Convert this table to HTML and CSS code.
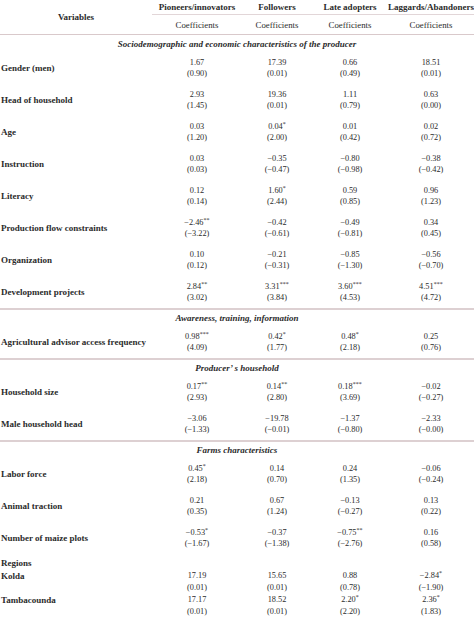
FILE: index.html
```html
<!DOCTYPE html>
<html lang="en">
<head>
<meta charset="utf-8">
<title>Coefficients table</title>
<link rel="stylesheet" href="styles.css">
</head>
<body>
<div class="table">
  <div class="head">
    <div class="var">Variables</div>
    <div class="grp">Pioneers/innovators</div>
    <div class="grp">Followers</div>
    <div class="grp">Late adopters</div>
    <div class="grp">Laggards/Abandoners</div>
    <div class="sub">Coefficients</div>
    <div class="sub">Coefficients</div>
    <div class="sub">Coefficients</div>
    <div class="sub">Coefficients</div>
  </div>

  <div class="section first">Sociodemographic and economic characteristics of the producer</div>
  <div class="row"><div class="label">Gender (men)</div>
    <div class="val"><span>1.67</span><span>(0.90)</span></div>
    <div class="val"><span>17.39</span><span>(0.01)</span></div>
    <div class="val"><span>0.66</span><span>(0.49)</span></div>
    <div class="val"><span>18.51</span><span>(0.01)</span></div></div>
  <div class="row"><div class="label">Head of household</div>
    <div class="val"><span>2.93</span><span>(1.45)</span></div>
    <div class="val"><span>19.36</span><span>(0.01)</span></div>
    <div class="val"><span>1.11</span><span>(0.79)</span></div>
    <div class="val"><span>0.63</span><span>(0.00)</span></div></div>
  <div class="row"><div class="label">Age</div>
    <div class="val"><span>0.03</span><span>(1.20)</span></div>
    <div class="val"><span>0.04<sup>*</sup></span><span>(2.00)</span></div>
    <div class="val"><span>0.01</span><span>(0.42)</span></div>
    <div class="val"><span>0.02</span><span>(0.72)</span></div></div>
  <div class="row"><div class="label">Instruction</div>
    <div class="val"><span>0.03</span><span>(0.03)</span></div>
    <div class="val"><span>−0.35</span><span>(−0.47)</span></div>
    <div class="val"><span>−0.80</span><span>(−0.98)</span></div>
    <div class="val"><span>−0.38</span><span>(−0.42)</span></div></div>
  <div class="row"><div class="label">Literacy</div>
    <div class="val"><span>0.12</span><span>(0.14)</span></div>
    <div class="val"><span>1.60<sup>*</sup></span><span>(2.44)</span></div>
    <div class="val"><span>0.59</span><span>(0.85)</span></div>
    <div class="val"><span>0.96</span><span>(1.23)</span></div></div>
  <div class="row"><div class="label">Production flow constraints</div>
    <div class="val"><span>−2.46<sup>**</sup></span><span>(−3.22)</span></div>
    <div class="val"><span>−0.42</span><span>(−0.61)</span></div>
    <div class="val"><span>−0.49</span><span>(−0.81)</span></div>
    <div class="val"><span>0.34</span><span>(0.45)</span></div></div>
  <div class="row"><div class="label">Organization</div>
    <div class="val"><span>0.10</span><span>(0.12)</span></div>
    <div class="val"><span>−0.21</span><span>(−0.31)</span></div>
    <div class="val"><span>−0.85</span><span>(−1.30)</span></div>
    <div class="val"><span>−0.56</span><span>(−0.70)</span></div></div>
  <div class="row"><div class="label">Development projects</div>
    <div class="val"><span>2.84<sup>**</sup></span><span>(3.02)</span></div>
    <div class="val"><span>3.31<sup>***</sup></span><span>(3.84)</span></div>
    <div class="val"><span>3.60<sup>***</sup></span><span>(4.53)</span></div>
    <div class="val"><span>4.51<sup>***</sup></span><span>(4.72)</span></div></div>

  <div class="section">Awareness, training, information</div>
  <div class="row"><div class="label">Agricultural advisor access frequency</div>
    <div class="val"><span>0.98<sup>***</sup></span><span>(4.09)</span></div>
    <div class="val"><span>0.42<sup>*</sup></span><span>(1.77)</span></div>
    <div class="val"><span>0.48<sup>*</sup></span><span>(2.18)</span></div>
    <div class="val"><span>0.25</span><span>(0.76)</span></div></div>

  <div class="section">Producer’ s household</div>
  <div class="row"><div class="label">Household size</div>
    <div class="val"><span>0.17<sup>**</sup></span><span>(2.93)</span></div>
    <div class="val"><span>0.14<sup>**</sup></span><span>(2.80)</span></div>
    <div class="val"><span>0.18<sup>***</sup></span><span>(3.69)</span></div>
    <div class="val"><span>−0.02</span><span>(−0.27)</span></div></div>
  <div class="row"><div class="label">Male household head</div>
    <div class="val"><span>−3.06</span><span>(−1.33)</span></div>
    <div class="val"><span>−19.78</span><span>(−0.01)</span></div>
    <div class="val"><span>−1.37</span><span>(−0.80)</span></div>
    <div class="val"><span>−2.33</span><span>(−0.00)</span></div></div>

  <div class="section">Farms characteristics</div>
  <div class="row"><div class="label">Labor force</div>
    <div class="val"><span>0.45<sup>*</sup></span><span>(2.18)</span></div>
    <div class="val"><span>0.14</span><span>(0.70)</span></div>
    <div class="val"><span>0.24</span><span>(1.35)</span></div>
    <div class="val"><span>−0.06</span><span>(−0.24)</span></div></div>
  <div class="row"><div class="label">Animal traction</div>
    <div class="val"><span>0.21</span><span>(0.35)</span></div>
    <div class="val"><span>0.67</span><span>(1.24)</span></div>
    <div class="val"><span>−0.13</span><span>(−0.27)</span></div>
    <div class="val"><span>0.13</span><span>(0.22)</span></div></div>
  <div class="row"><div class="label">Number of maize plots</div>
    <div class="val"><span>−0.53<sup>*</sup></span><span>(−1.67)</span></div>
    <div class="val"><span>−0.37</span><span>(−1.38)</span></div>
    <div class="val"><span>−0.75<sup>**</sup></span><span>(−2.76)</span></div>
    <div class="val"><span>0.16</span><span>(0.58)</span></div></div>

  <div class="row regions"><div class="label">Regions</div></div>
  <div class="row compact"><div class="label">Kolda</div>
    <div class="val"><span>17.19</span><span>(0.01)</span></div>
    <div class="val"><span>15.65</span><span>(0.01)</span></div>
    <div class="val"><span>0.88</span><span>(0.78)</span></div>
    <div class="val"><span>−2.84<sup>*</sup></span><span>(−1.90)</span></div></div>
  <div class="row compact"><div class="label">Tambacounda</div>
    <div class="val"><span>17.17</span><span>(0.01)</span></div>
    <div class="val"><span>18.52</span><span>(0.01)</span></div>
    <div class="val"><span>2.20<sup>*</sup></span><span>(2.20)</span></div>
    <div class="val"><span>2.36<sup>*</sup></span><span>(1.83)</span></div></div>
</div>
</body>
</html>
```

FILE: styles.css
```css
html, body {
  margin: 0;
  padding: 0;
  background: #ffffff;
  overflow: hidden;
}

body {
  width: 474px;
  font-family: "Liberation Serif", "Times New Roman", serif;
  color: #2b2b2b;
}

.table {
  width: 474px;
}

.head {
  display: grid;
  grid-template-columns: 152px 90px 70px 76px 86px;
  grid-template-rows: 15px 19px;
  border-bottom: 1px solid #d9c9cb;
}

.var {
  grid-row: 1 / span 2;
  grid-column: 1;
  display: flex;
  align-items: center;
  justify-content: center;
  font-weight: bold;
  font-size: 9px;
}

.grp {
  display: flex;
  align-items: center;
  justify-content: center;
  font-weight: bold;
  font-size: 9px;
  white-space: nowrap;
  border-bottom: 1px solid #e2d6d8;
}

.sub {
  display: flex;
  align-items: center;
  justify-content: center;
  font-size: 8.8px;
  white-space: nowrap;
}

.section {
  box-sizing: border-box;
  height: 18px;
  display: flex;
  align-items: center;
  justify-content: center;
  font-weight: bold;
  font-style: italic;
  font-size: 9px;
  border-top: 2px solid #ddd0d2;
}

.section.first {
  border-top: none;
  height: 17px;
}

.row {
  display: grid;
  grid-template-columns: 152px 90px 70px 76px 86px;
  height: 32px;
  align-items: center;
}

.label {
  padding-left: 1px;
  font-weight: bold;
  font-size: 9px;
  white-space: nowrap;
}

.val {
  display: flex;
  flex-direction: column;
  align-items: center;
  font-size: 8.3px;
  line-height: 11px;
  white-space: nowrap;
}

.val sup {
  font-size: 6.2px;
  line-height: 0;
  vertical-align: 3px;
}

.row.regions {
  height: 16px;
  align-items: end;
}

.row.regions .label {
  line-height: 12px;
  padding-bottom: 1px;
}

.row.compact {
  height: 24px;
  align-items: start;
}

.row.compact .label {
  line-height: 12px;
}

.row.compact .val {
  line-height: 12px;
}
```
